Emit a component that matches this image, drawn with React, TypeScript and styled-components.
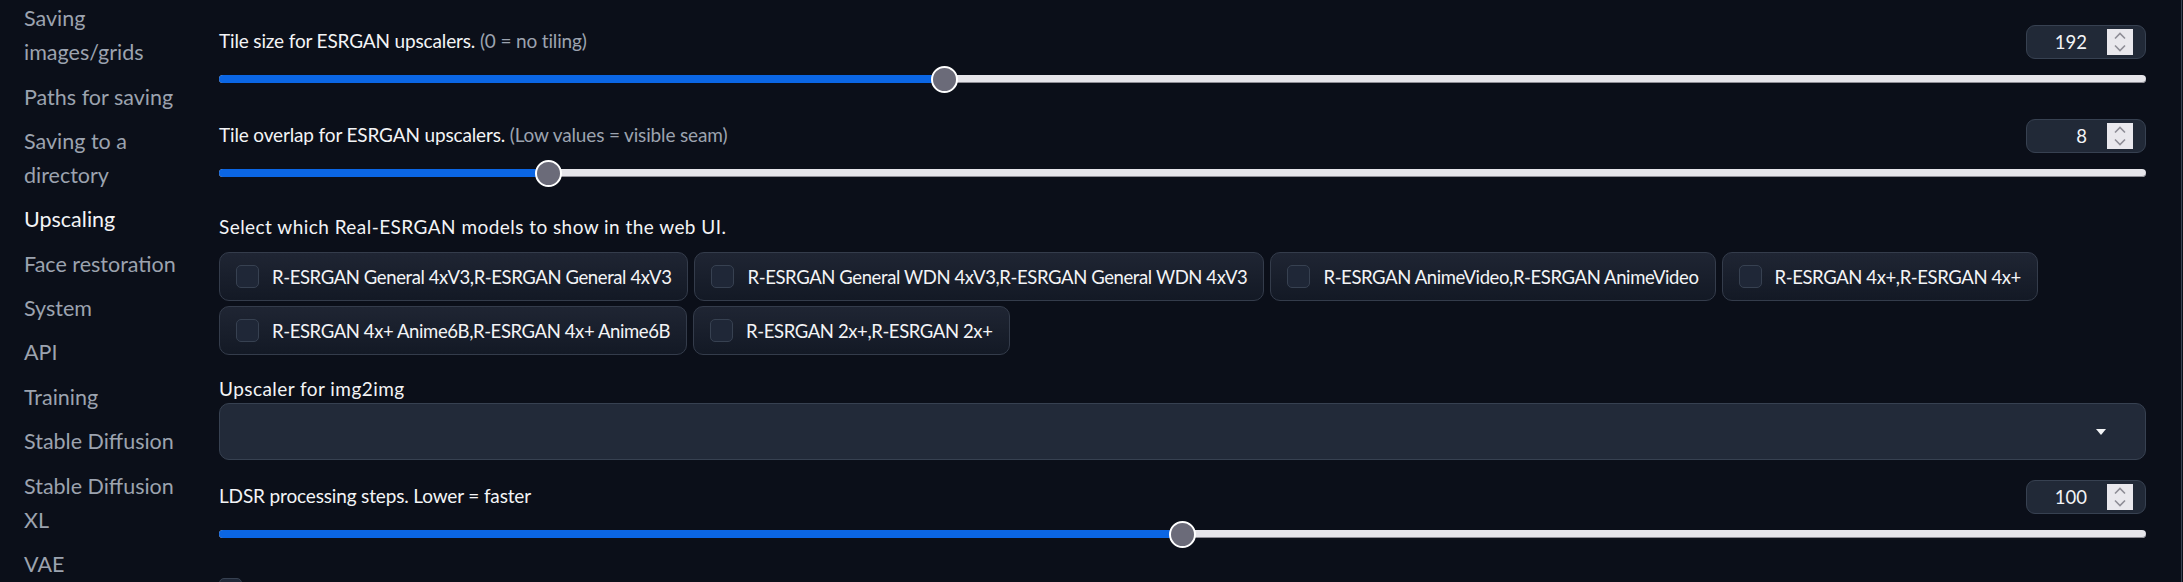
import React from 'react';
import styled, { createGlobalStyle } from 'styled-components';

const GlobalStyle = createGlobalStyle`
  html, body {
    margin: 0;
    padding: 0;
    background: #0b0f19;
  }
  body {
    font-family: Lato, "Noto Sans", sans-serif;
    color: #f3f4f6;
    overflow: hidden;
  }
  * {
    box-sizing: border-box;
  }
`;

const navItems = [
  'Saving images/grids',
  'Paths for saving',
  'Saving to a directory',
  'Upscaling',
  'Face restoration',
  'System',
  'API',
  'Training',
  'Stable Diffusion',
  'Stable Diffusion XL',
  'VAE',
];

const models = [
  'R-ESRGAN General 4xV3,R-ESRGAN General 4xV3',
  'R-ESRGAN General WDN 4xV3,R-ESRGAN General WDN 4xV3',
  'R-ESRGAN AnimeVideo,R-ESRGAN AnimeVideo',
  'R-ESRGAN 4x+,R-ESRGAN 4x+',
  'R-ESRGAN 4x+ Anime6B,R-ESRGAN 4x+ Anime6B',
  'R-ESRGAN 2x+,R-ESRGAN 2x+',
];

const Spin = () => (
  <Spinner>
    <svg width="26" height="26" viewBox="0 0 26 26" fill="none">
      <polyline points="8,9.5 13,4.5 18,9.5" stroke="#8f8e97" strokeWidth="1.6" />
      <polyline points="8,16.5 13,21.5 18,16.5" stroke="#8f8e97" strokeWidth="1.6" />
    </svg>
  </Spinner>
);

type SliderProps = {
  label: string;
  hint?: string;
  value: number;
  max: number;
};

const SliderField = ({ label, hint, value, max }: SliderProps) => {
  const frac = value / max;
  const pos = `calc(13px + ${frac} * (100% - 26px))`;
  return (
    <Field>
      <FieldHeader>
        <Label>
          {label} {hint && <Hint>{hint}</Hint>}
        </Label>
        <NumberBox>
          <NumberValue>{value}</NumberValue>
          <Spin />
        </NumberBox>
      </FieldHeader>
      <SliderArea>
        <Track>
          <Fill style={{ width: pos }} />
          <Thumb style={{ left: pos }} />
        </Track>
      </SliderArea>
    </Field>
  );
};

export default function App() {
  return (
    <Page>
      <GlobalStyle />
      <Sidebar>
        {navItems.map((item) => (
          <NavItem key={item} $active={item === 'Upscaling'}>
            {item}
          </NavItem>
        ))}
      </Sidebar>
      <Main>
        <SliderField
          label="Tile size for ESRGAN upscalers."
          hint="(0 = no tiling)"
          value={192}
          max={512}
        />
        <SliderField
          label="Tile overlap for ESRGAN upscalers."
          hint="(Low values = visible seam)"
          value={8}
          max={48}
        />
        <Field>
          <BlockLabel>Select which Real-ESRGAN models to show in the web UI.</BlockLabel>
          <CheckGroup>
            {models.map((m) => (
              <CheckItem key={m}>
                <Box />
                {m}
              </CheckItem>
            ))}
          </CheckGroup>
        </Field>
        <Field>
          <BlockLabel>Upscaler for img2img</BlockLabel>
          <Select>
            <svg width="10" height="6" viewBox="0 0 10 6">
              <polygon points="0,0 10,0 5,6" fill="#f3f4f6" />
            </svg>
          </Select>
        </Field>
        <SliderField label="LDSR processing steps. Lower = faster" value={100} max={200} />
        <CheckRow>
          <Box />
        </CheckRow>
      </Main>
    </Page>
  );
}

const Page = styled.div`
  display: flex;
  width: 2183px;
  height: 582px;
  overflow: hidden;
  background: #0b0f19;
`;

const Sidebar = styled.nav`
  width: 219px;
  flex-shrink: 0;
  margin-top: -4px;
  padding: 0 30px 0 24px;
`;

const NavItem = styled.div<{ $active?: boolean }>`
  padding: 5.2px 0;
  font-size: 21.5px;
  line-height: 34px;
  color: ${(p) => (p.$active ? '#f3f4f6' : '#9ca3af')};
`;

const Main = styled.main`
  flex: 1;
  display: flex;
  flex-direction: column;
  gap: 20px;
  padding: 25px 35px 0 0;
  margin-right: 1px;
  border-right: 1px solid #374151;
`;

const Field = styled.div`
  display: flex;
  flex-direction: column;
`;

const FieldHeader = styled.div`
  display: flex;
  justify-content: space-between;
  align-items: center;
  height: 34px;
`;

const Label = styled.span`
  padding-bottom: 4px;
  font-size: 19px;
  letter-spacing: -0.15px;
  color: #f3f4f6;
`;

const Hint = styled.span`
  color: #9ca3af;
`;

const BlockLabel = styled.div`
  font-size: 19px;
  line-height: 28px;
  letter-spacing: 0.45px;
  color: #f3f4f6;
`;

const NumberBox = styled.div`
  display: flex;
  align-items: center;
  justify-content: flex-end;
  gap: 20px;
  width: 120px;
  height: 34px;
  padding-right: 12px;
  border: 1px solid #374151;
  border-radius: 9px;
  background: #212937;
`;

const NumberValue = styled.span`
  font-size: 18.5px;
  color: #f3f4f6;
`;

const Spinner = styled.div`
  display: flex;
  width: 26px;
  height: 26px;
  background: #e9e8ed;
`;

const SliderArea = styled.div`
  display: flex;
  align-items: center;
  height: 40px;
`;

const Track = styled.div`
  position: relative;
  width: 100%;
  height: 8px;
  border-radius: 4px;
  background: #e6e5ea;
  box-shadow: inset 0 -1px 0 #8e8d95;
`;

const Fill = styled.div`
  position: absolute;
  left: 0;
  top: 0;
  bottom: 0;
  border-radius: 4px;
  background: #0b66e4;
`;

const Thumb = styled.div`
  position: absolute;
  top: 50%;
  width: 27px;
  height: 27px;
  margin: -13.5px 0 0 -13.5px;
  border-radius: 50%;
  border: 2px solid #ffffff;
  background: #6b6b79;
`;

const CheckGroup = styled.div`
  display: flex;
  flex-wrap: wrap;
  gap: 5px 6px;
  margin-top: 11px;
`;

const CheckItem = styled.label`
  display: flex;
  align-items: center;
  gap: 13px;
  height: 49px;
  padding: 0 16px;
  border: 1px solid #343c4b;
  border-radius: 10px;
  background: linear-gradient(#1f2533, #131925);
  font-size: 18.5px;
  letter-spacing: -0.4px;
  color: #f3f4f6;
  white-space: nowrap;
`;

const Box = styled.span`
  display: block;
  width: 23px;
  height: 23px;
  border: 1px solid #374151;
  border-radius: 5px;
  background: #1f2737;
`;

const Select = styled.div`
  display: flex;
  align-items: center;
  justify-content: flex-end;
  height: 57px;
  padding-right: 39px;
  border: 1px solid #374151;
  border-radius: 10px;
  background: #222a39;
`;

const CheckRow = styled.div`
  display: flex;
  padding-top: 4px;
`;
